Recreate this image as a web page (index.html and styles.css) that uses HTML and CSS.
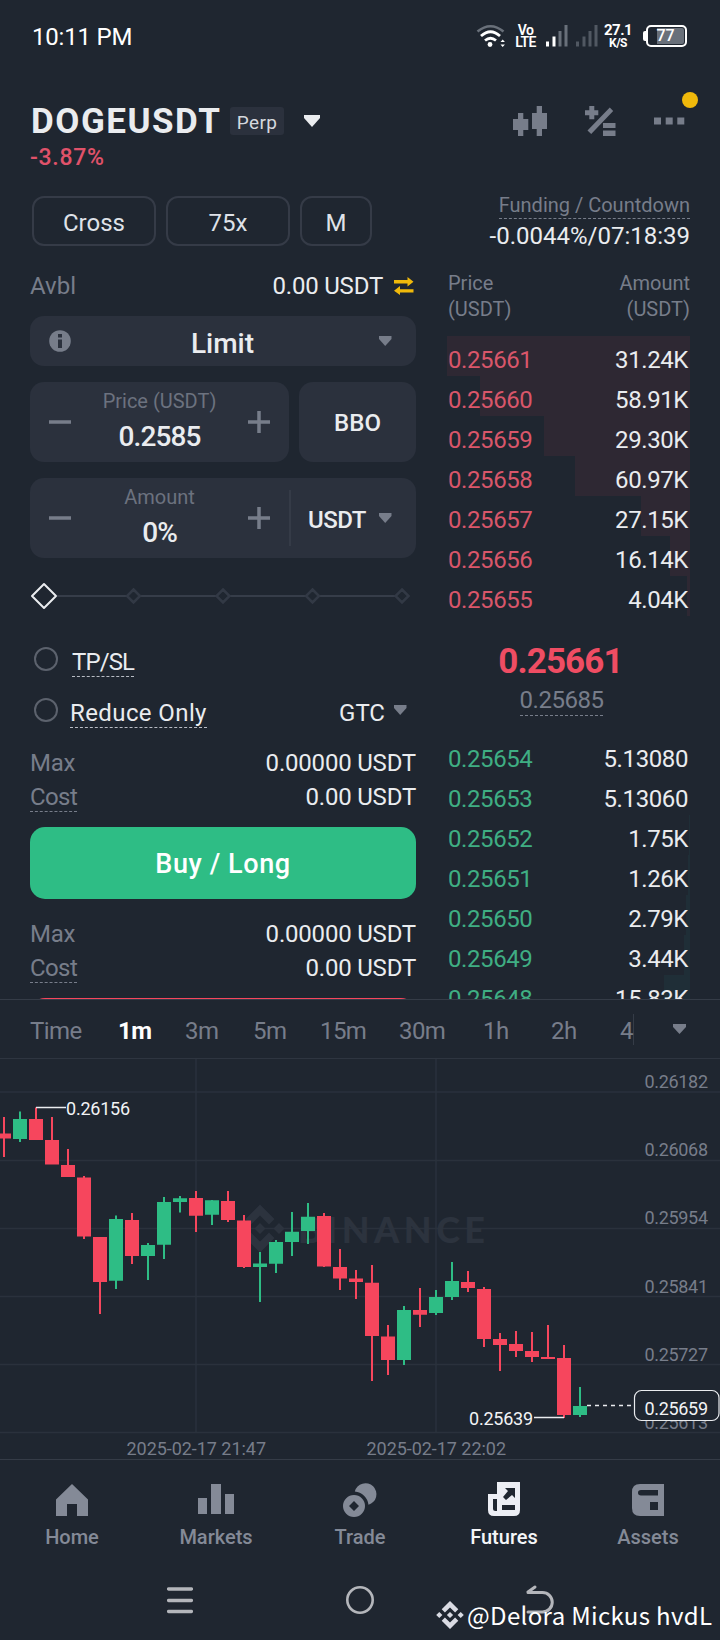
FILE: index.html
```
<!DOCTYPE html>
<html lang="en">
<head>
    <meta charset="utf-8">
    <title>DOGEUSDT Perp</title>
    <link rel="stylesheet" href="styles.css">
</head>
<body>
<div class="phone">

    <div class="status-bar">
        <span class="clock">10:11 PM</span>
        <div class="status-icons">
            <svg class="wifi" width="30" height="24" viewBox="0 0 30 24">
                <path d="M1.500 7.500Q14.500-3 27.500 7.500" fill="none" stroke="#69707a" stroke-width="2.600"/>
                <path d="M5 12Q14.500 3.500 24 12M9 16.500Q14.500 12 20 16.500" fill="none" stroke="#fff" stroke-width="2.800"/>
                <circle cx="14" cy="20.500" r="2.400" fill="#fff"/>
                <path d="M24.500 18l2.200-2.500 2.200 2.500zM24.500 20.500l2.200 2.500 2.200-2.500z" fill="#fff"/>
            </svg>
            <span class="volte">Vo<br>LTE</span>
            <svg class="signal" width="22" height="22" viewBox="0 0 22 22">
                <path d="M1.500 16.500v5M8 11.500v10" stroke="#fff" stroke-width="3"/>
                <path d="M14 6v15.500M20 0v21.500" stroke="#69707a" stroke-width="3"/>
            </svg>
            <svg class="signal second" width="22" height="22" viewBox="0 0 22 22">
                <path d="M1.500 16.500v5M8 11.500v10M14 6v15.500M20 0v21.500" stroke="#515862" stroke-width="3"/>
            </svg>
            <span class="speed">27.1<br><small>K/S</small></span>
            <div class="battery">77</div>
        </div>
    </div>

    <div class="title-row">
        <h1>DOGEUSDT</h1>
        <span class="perp">Perp</span>
        <svg class="title-arrow" width="16" height="12" viewBox="0 0 16 12"><path d="M0 0h16v3L8 12 0 3z" fill="#eaecef"/></svg>
        <div class="tools">
            <svg width="34" height="30" viewBox="0 0 34 30" fill="#777d8a">
                <path d="M5 7h5.300v6h5v11h-5v6H5v-6H0V13h5zM23.700 0H29v7h5v16h-5v7h-5.300v-7H19V7h4.700z"/>
            </svg>
            <svg width="31" height="30" viewBox="0 0 31 30" fill="#777d8a">
                <path d="M4.300 0h5v4.300h4v5h-4v4h-5v-4H0v-5h4.300zM18 17h12.500v5H18zM18 24.500h12.500V30H18zM24.800 1.500l3.400 3.400L6.200 28 2.500 24.500z"/>
            </svg>
            <div class="more">
                <svg width="31" height="30" viewBox="0 0 31 30" fill="#777d8a"><path d="M0 11.500h7v7H0zM11.700 11.500h7v7h-7zM23.300 11.500h7v7h-7z"/></svg>
                <span class="dot"></span>
            </div>
        </div>
    </div>
    <div class="change">-3.87%</div>

    <div class="mode-row">
        <div class="mode">Cross</div>
        <div class="mode">75x</div>
        <div class="mode small">M</div>
        <div class="funding">
            <span class="funding-label">Funding / Countdown</span>
            <span class="funding-value">-0.0044%/07:18:39</span>
        </div>
    </div>

    <div class="panels">
        <div class="order-form">
            <div class="avbl">
                <span class="grey">Avbl</span>
                <span class="avbl-value">0.00 USDT</span>
                <svg width="20" height="18" viewBox="0 0 20 18" fill="#f0b90b">
                    <path d="M0 3h13.500V0L19.500 4.800 13.500 9.600V6.500H0zM19.500 12.200H6V9L0 13.700 6 18v-2.500h13.500z"/>
                </svg>
            </div>

            <div class="box limit">
                <svg width="22" height="22" viewBox="0 0 22 22">
                    <circle cx="11" cy="11" r="10.800" fill="#777d8a"/>
                    <path d="M9 4h4v3.500H9zM9 9.500h4V18H9z" fill="#2b313d"/>
                </svg>
                <span>Limit</span>
                <svg width="13" height="10" viewBox="0 0 13 10"><path d="M0 0h12.500v3L6.200 10 0 3z" fill="#777d8a"/></svg>
            </div>

            <div class="price-row">
                <div class="box stepper">
                    <svg width="22" height="22" viewBox="0 0 22 22"><path d="M0 11h22" stroke="#777d8a" stroke-width="3.500"/></svg>
                    <div class="field"><small>Price (USDT)</small><b>0.2585</b></div>
                    <svg width="22" height="22" viewBox="0 0 22 22"><path d="M0 11h22M11 0v22" stroke="#777d8a" stroke-width="3.500"/></svg>
                </div>
                <div class="box bbo">BBO</div>
            </div>

            <div class="box amount-row">
                <div class="stepper">
                    <svg width="22" height="22" viewBox="0 0 22 22"><path d="M0 11h22" stroke="#777d8a" stroke-width="3.500"/></svg>
                    <div class="field"><small>Amount</small><b>0%</b></div>
                    <svg width="22" height="22" viewBox="0 0 22 22"><path d="M0 11h22M11 0v22" stroke="#777d8a" stroke-width="3.500"/></svg>
                </div>
                <div class="unit">
                    <span>USDT</span>
                    <svg width="13" height="10" viewBox="0 0 13 10"><path d="M0 0h12.500v3L6.200 10 0 3z" fill="#777d8a"/></svg>
                </div>
            </div>

            <svg class="slider" width="386" height="76" viewBox="0 0 386 76" fill="none">
                <path d="M27 38h338" stroke="#363d49" stroke-width="2"/>
                <path d="M103.500 31.500l6.500 6.500-6.500 6.500-6.500-6.500zM193 31.500l6.500 6.500-6.500 6.500-6.500-6.500zM282.500 31.500l6.500 6.500-6.500 6.500-6.500-6.500zM372 31.500l6.500 6.500-6.500 6.500-6.500-6.500z" fill="#1f2630" stroke="#323945" stroke-width="2.500"/>
                <path d="M14 26l12 12-12 12L2 38z" fill="#1f2630" stroke="#eaecef" stroke-width="2" stroke-linejoin="round"/>
            </svg>

            <div class="option">
                <span class="radio"></span>
                <span class="option-name tpsl">TP/SL</span>
            </div>
            <div class="option">
                <span class="radio"></span>
                <span class="option-name">Reduce Only</span>
                <span class="gtc">GTC</span>
                <svg class="gtc-arrow" width="13" height="10" viewBox="0 0 13 10"><path d="M0 0h12.500v3L6.200 10 0 3z" fill="#777d8a"/></svg>
            </div>

            <div class="info first"><span class="grey">Max</span><span>0.00000 USDT</span></div>
            <div class="info"><span class="grey cost">Cost</span><span>0.00 USDT</span></div>
            <div class="btn buy">Buy / Long</div>
            <div class="info second"><span class="grey">Max</span><span>0.00000 USDT</span></div>
            <div class="info"><span class="grey cost">Cost</span><span>0.00 USDT</span></div>
            <div class="btn sell"></div>
        </div>

        <div class="order-book">
            <div class="book-head">
                <div>Price<br>(USDT)</div>
                <div class="right">Amount<br>(USDT)</div>
            </div>
            <div class="asks">
                <div class="level"><i style="width: 243px"></i><span>0.25661</span><span>31.24K</span></div>
                <div class="level"><i style="width: 210px"></i><span>0.25660</span><span>58.91K</span></div>
                <div class="level"><i style="width: 146px"></i><span>0.25659</span><span>29.30K</span></div>
                <div class="level"><i style="width: 115px"></i><span>0.25658</span><span>60.97K</span></div>
                <div class="level"><i style="width: 49px"></i><span>0.25657</span><span>27.15K</span></div>
                <div class="level"><i style="width: 20px"></i><span>0.25656</span><span>16.14K</span></div>
                <div class="level"><i style="width: 3px"></i><span>0.25655</span><span>4.04K</span></div>
            </div>
            <div class="last-price">0.25661</div>
            <div class="mark-price"><span>0.25685</span></div>
            <div class="bids">
                <div class="level"><span>0.25654</span><span>5.13080</span></div>
                <div class="level"><span>0.25653</span><span>5.13060</span></div>
                <div class="level"><i style="width: 1px"></i><span>0.25652</span><span>1.75K</span></div>
                <div class="level"><i style="width: 2px"></i><span>0.25651</span><span>1.26K</span></div>
                <div class="level"><i style="width: 4px"></i><span>0.25650</span><span>2.79K</span></div>
                <div class="level"><i style="width: 6px"></i><span>0.25649</span><span>3.44K</span></div>
                <div class="level"><i style="width: 26px"></i><span>0.25648</span><span>15.83K</span></div>
            </div>
        </div>
    </div>

    <div class="intervals">
        <div class="interval-list">
            <span>Time</span>
            <span class="active">1m</span>
            <span>3m</span>
            <span>5m</span>
            <span>15m</span>
            <span>30m</span>
            <span>1h</span>
            <span>2h</span>
            <span>4</span>
        </div>
        <svg width="13" height="10" viewBox="0 0 13 10"><path d="M0 0h13v3L6.500 10 0 3z" fill="#777d8a"/></svg>
    </div>

    <svg class="chart" width="720" height="400" viewBox="0 9 720 400">
        <!-- grid -->
        <path class="grid" d="M0 42h720M0 110.500h720M0 178.500h720M0 246.500h720M0 314.500h720M0 382.500h720M196 9v373M436 9v373"/>
        <!-- logo behind the candles -->
        <g class="mark">
            <path d="M260 154.500l14.500 14.500-5.500 5.500-9-9-9 9-5.500-5.500zM260 202.500l14.500-14.500-5.500-5.500-9 9-9-9-5.500 5.500zM260 173l5.500 5.500-5.500 5.500-5.500-5.500zM279 173l5.500 5.500-5.500 5.500-5.500-5.500zM241 173l5.500 5.500-5.500 5.500-5.500-5.500z"/>
            <text x="298" y="192.500" textLength="187">BINANCE</text>
        </g>
        <!-- candles: wick, then body -->
        <path class="wick down" d="M4 67v40M36 57.500v32M52 67v47M68 99v28M84 126v63M100 187v77M132 163v51M196 141v41M228 141v31M244 165v53M324 163v54M340 199v41M356 220v29M372 215v116M388 275v50M420 238v39M468 221v21M484 237v60M500 283v38M516 281v26M532 282v30M548 275v34M564 295v73"/>
        <path class="wick up" d="M20 61.500v30.500M116 165.500v73.500M148 193v37M164 147v62M180 146v16.500M212 150v25M260 202v50M276 190v33M292 162v44M308 153v41M404 256v59M436 240v25M452 212v38M580 337v30"/>
        <path class="body down" d="M4 83.500v5M36 69v21M52 90v24.500M68 115v12M84 127.500v59M100 187v45M132 170v36M196 148v17.700M228 151v19M244 170.500v46.500M324 166v50.500M340 217v11.500M356 228.500v3.500M372 232.700v53.300M388 286.500v23.500M420 260v4.700M468 232v6M484 239v50M500 289v6M516 294v7M532 301v6M548 307v2M564 308v57"/>
        <path class="body up" d="M20 69v20M116 169v61.700M148 195v11M164 152v42.700M180 148.300v3.700M212 150.300v14.500M260 213.500v3.500M276 192v21.700M292 181.700v10.300M308 166.700v14.300M404 260v50M436 247v16M452 231v16M580 356v9"/>
        <!-- high / low / last price -->
        <path class="pointer" d="M36 57.500h30M534 367.500h30"/>
        <path class="pointer" d="M587 355.500h47" stroke-dasharray="4 4"/>
        <text class="white" x="66" y="64.700" textLength="64">0.26156</text>
        <text class="white" x="469" y="374.700" textLength="64">0.25639</text>
        <text x="644.500" y="38.300" textLength="63.500">0.26182</text>
        <text x="644.500" y="106.300" textLength="63.500">0.26068</text>
        <text x="644.500" y="174.300" textLength="63.500">0.25954</text>
        <text x="644.500" y="243" textLength="63.500">0.25841</text>
        <text x="644.500" y="311" textLength="63.500">0.25727</text>
        <text x="644.500" y="379" textLength="63.500">0.25613</text>
        <rect class="tag" x="634.500" y="340.500" width="84.500" height="30" rx="7"/>
        <text class="white" x="644.500" y="364.800" textLength="63.500">0.25659</text>
        <text x="126.500" y="405" textLength="139.500">2025-02-17 21:47</text>
        <text x="366.500" y="405" textLength="139.500">2025-02-17 22:02</text>
    </svg>

    <div class="tab-bar">
        <div class="tab">
            <svg width="36" height="36" viewBox="0 0 36 36"><path d="M18 1l16 15.500V33H23V21H13v12H2V16.500z"/></svg>
            <span>Home</span>
        </div>
        <div class="tab">
            <svg width="36" height="36" viewBox="0 0 36 36"><path d="M0 15h9v16H0zM13 1h10v30H13zM27 11h9v20h-9z"/></svg>
            <span>Markets</span>
        </div>
        <div class="tab">
            <svg width="36" height="36" viewBox="0 0 36 36">
                <path fill-rule="evenodd" d="M12 12a11 11 0 1 1 0 22 11 11 0 0 1 0-22zM12 18l-5 5 5 5 5-5z"/>
                <path d="M12.800 8.500A11 11 0 1 1 26.500 21.800 15 15 0 0 0 12.800 8.500z"/>
            </svg>
            <span>Trade</span>
        </div>
        <div class="tab active">
            <svg width="36" height="36" viewBox="0 0 36 36">
                <path d="M11-1h23v28q0 6-6 6H8q-6 0-6-6V11h9z"/>
                <path class="hole" d="M7 16h4v12H9.500Q7 28 7 25.500zM16 22h13v5H16zM19 5h10v10l-3-3-6 5-3-3 5-6z"/>
            </svg>
            <span>Futures</span>
        </div>
        <div class="tab">
            <svg width="36" height="36" viewBox="0 0 36 36">
                <path d="M10 1h24v32H10q-8 0-8-8V9q0-8 8-8z"/>
                <path class="hole" d="M11 7h17v5.500H11q-3 0-3-2.700T11 7zM20 19h8v8h-8z"/>
            </svg>
            <span>Assets</span>
        </div>
    </div>

    <div class="system-nav">
        <svg width="26" height="30" viewBox="0 0 26 30"><path d="M1.500 4h23M1.500 15.500h23M1.500 26.500h23" stroke-width="3.300"/></svg>
        <svg width="30" height="30" viewBox="0 0 30 30"><circle cx="15" cy="15" r="12.700" stroke-width="2.600"/></svg>
        <svg width="28" height="30" viewBox="0 0 28 30"><path d="M2 7.500h14.500a9.500 9.500 0 0 1 0 19.500H2M2 7l7-5" stroke-width="3"/></svg>
    </div>

    <div class="credit">
        <svg width="28" height="28" viewBox="0 0 28 28" fill="#d9dbe3">
            <path d="M14 0l8.300 8.300-3.200 3.200L14 6.400l-5.100 5.100-3.200-3.200zM14 28l8.300-8.300-3.200-3.200-5.100 5.100-5.100-5.100-3.200 3.200zM14 10.900l3.100 3.100-3.100 3.100-3.100-3.100zM24.700 10.900l3.100 3.100-3.100 3.100-3.100-3.100zM3.300 10.900L6.400 14l-3.100 3.100L.2 14z"/>
        </svg>
        <span>@Delora Mickus hvdL</span>
    </div>
</div>
</body>
</html>
```
FILE: styles.css
```
* {
    box-sizing: border-box;
}
body {
    margin: 0;
    background-color: #1f2630;
    color: #eaecef;
    font-family: Roboto, "Liberation Sans", sans-serif;
    font-size: 24px;
}
svg {
    display: block;
    flex: none;
}
.phone {
    width: 720px;
    height: 1640px;
    position: relative;
    overflow: hidden;
    background-color: #1f2630;
}
.grey {
    color: #777d8a;
}

/* status bar */
.status-bar {
    height: 72px;
    padding: 0 33px 0 32px;
    display: flex;
    align-items: center;
    justify-content: space-between;
    color: #fff;
}
.clock {
    padding-top: 2px;
    letter-spacing: -0.2px;
}
.status-icons {
    display: flex;
    align-items: center;
}
.volte {
    width: 21px;
    margin-left: 9px;
    font-size: 14px;
    font-weight: 600;
    line-height: 12px;
    text-align: center;
    letter-spacing: -0.6px;
}
.signal {
    margin-left: 10px;
}
.signal.second {
    margin-left: 8px;
}
.speed {
    width: 28px;
    margin-left: 6px;
    font-size: 15px;
    font-weight: 700;
    line-height: 12px;
    text-align: center;
    letter-spacing: -0.5px;
}
.speed small {
    font-size: 12px;
}
.battery {
    width: 41px;
    height: 22px;
    margin-left: 14px;
    padding-right: 2px;
    border: 2px solid #fff;
    border-radius: 5px;
    box-shadow: inset 0 0 0 1px #1f2630;
    background: linear-gradient(to right, #1f2630 9px, #69707a 9px);
    font-size: 16px;
    font-weight: 500;
    line-height: 18px;
    text-align: center;
    position: relative;
}
.battery::before {
    content: "";
    position: absolute;
    left: -5px;
    top: 4px;
    width: 3px;
    height: 10px;
    background-color: #fff;
    border-radius: 2px 0 0 2px;
}

/* pair title */
.title-row {
    height: 42px;
    margin-top: 28px;
    padding: 0 35px 0 31px;
    display: flex;
    align-items: center;
}
h1 {
    margin: 0;
    width: 199px;
    padding-top: 2px;
    font-size: 35px;
    line-height: 42px;
    font-weight: 700;
    letter-spacing: 1.5px;
}
.perp {
    width: 54px;
    height: 28px;
    background-color: #2b313d;
    border-radius: 3px;
    font-size: 19px;
    line-height: 31px;
    text-align: center;
    letter-spacing: 0.4px;
    color: #d5d8de;
}
.title-arrow {
    margin-left: 20px;
}
.tools {
    margin-left: auto;
    display: flex;
    gap: 38px;
}
.more {
    position: relative;
}
.dot {
    position: absolute;
    left: 28px;
    top: -14px;
    width: 16px;
    height: 16px;
    border-radius: 50%;
    background-color: #f0b90b;
}
.change {
    height: 30px;
    padding-left: 30px;
    font-size: 23px;
    line-height: 32px;
    font-weight: 500;
    letter-spacing: 0.7px;
    color: #e0526a;
}

/* margin mode buttons */
.mode-row {
    height: 61px;
    margin-top: 20px;
    padding: 0 30px 0 32px;
    display: flex;
    gap: 10px;
}
.mode {
    width: 124px;
    height: 50px;
    margin-top: 4px;
    border: 2px solid #353b47;
    border-radius: 12px;
    line-height: 50px;
    text-align: center;
    color: #dfe2e8;
}
.mode.small {
    width: 72px;
}
.funding {
    margin-left: auto;
    display: flex;
    flex-direction: column;
    align-items: flex-end;
}
.funding-label {
    font-size: 20px;
    line-height: 26px;
    border-bottom: 1px dashed #777d8a;
    color: #777d8a;
}
.funding-value {
    line-height: 34px;
}

.panels {
    height: 746px;
    padding: 0 30px;
    display: flex;
    justify-content: space-between;
    overflow: hidden;
}

/* order form */
.order-form {
    width: 386px;
    padding-top: 16px;
}
.avbl {
    height: 34px;
    padding-right: 2px;
    display: flex;
    align-items: center;
}
.avbl-value {
    margin-left: auto;
    margin-right: 11px;
    letter-spacing: -0.2px;
}
.box {
    background-color: #2b313d;
    border-radius: 14px;
}
.limit {
    height: 50px;
    margin-top: 13px;
    padding: 0 24px 0 19px;
    display: flex;
    align-items: center;
    justify-content: space-between;
    font-size: 28px;
    font-weight: 500;
}
.limit span {
    padding: 4px 5px 0 0;
}
.price-row {
    margin-top: 16px;
    display: flex;
    gap: 10px;
}
.stepper {
    width: 259px;
    height: 80px;
    padding: 0 19px;
    display: flex;
    align-items: center;
    justify-content: space-between;
}
.field {
    padding-top: 4px;
    display: flex;
    flex-direction: column;
    align-items: center;
}
.field small {
    font-size: 20px;
    line-height: 26px;
    color: #6c727f;
}
.field b {
    font-size: 28px;
    line-height: 46px;
    font-weight: 500;
    letter-spacing: -0.9px;
}
.bbo {
    width: 117px;
    height: 80px;
    line-height: 83px;
    text-align: center;
    font-weight: 500;
}
.amount-row {
    height: 80px;
    margin-top: 16px;
    display: flex;
    align-items: center;
}
.unit {
    flex: 1;
    height: 56px;
    padding: 0 24px 0 17px;
    border-left: 2px solid #353b47;
    display: flex;
    align-items: center;
    justify-content: space-between;
    font-weight: 500;
    letter-spacing: -0.5px;
}
.unit span {
    padding-top: 3px;
}
.option {
    height: 51px;
    padding-left: 4px;
    display: flex;
    align-items: flex-start;
}
.radio {
    width: 24px;
    height: 24px;
    margin: 13px 12px 0 0;
    border: 2px solid #5c626d;
    border-radius: 50%;
}
.option-name {
    margin-top: 14px;
    line-height: 28px;
    letter-spacing: 0.4px;
    border-bottom: 1px dashed #b8bcc4;
}
.tpsl {
    margin-left: 2px;
    letter-spacing: -0.9px;
}
.gtc {
    margin: 14px 9px 0 auto;
    line-height: 28px;
}
.gtc-arrow {
    margin: 20px 9px 0 0;
}
.info {
    height: 34px;
    display: flex;
    align-items: center;
    justify-content: space-between;
    letter-spacing: -0.2px;
}
.info.first {
    margin-top: 10px;
}
.info.second {
    margin-top: 18px;
}
.cost {
    line-height: 28px;
    letter-spacing: -0.6px;
    border-bottom: 1px dashed #777d8a;
}
.btn {
    height: 72px;
    margin-top: 13px;
    border-radius: 15px;
    font-size: 27px;
    font-weight: 500;
    line-height: 75px;
    letter-spacing: 0.6px;
    text-align: center;
    color: #fff;
}
.buy {
    background-color: #2ebd85;
}
.sell {
    background-color: #f6465d;
}

/* order book */
.order-book {
    width: 242px;
    padding-top: 17px;
}
.book-head {
    display: flex;
    justify-content: space-between;
    margin-bottom: 14px;
    font-size: 20px;
    line-height: 26px;
    color: #777d8a;
}
.right {
    text-align: right;
}
.level {
    height: 40px;
    padding: 8px 2px 0 0;
    line-height: 33px;
    letter-spacing: -0.4px;
    display: flex;
    justify-content: space-between;
    position: relative;
}
/* depth bar behind the numbers */
.level i {
    position: absolute;
    top: 0;
    right: 0;
    height: 40px;
}
.level span {
    position: relative;
}
.asks i {
    background-color: #2e2833;
}
.bids i {
    background-color: #1f2e37;
}
.asks span:nth-last-child(2) {
    color: #d9566a;
}
.bids span:nth-last-child(2) {
    color: #3fae83;
}
.last-price {
    height: 44px;
    margin-top: 22px;
    padding-right: 17px;
    font-size: 35px;
    font-weight: 700;
    line-height: 47px;
    letter-spacing: -0.9px;
    text-align: center;
    color: #ef4d63;
}
.mark-price {
    height: 34px;
    margin-bottom: 19px;
    padding-right: 15px;
    display: flex;
    justify-content: center;
    color: #777d8a;
}
.mark-price span {
    height: 34px;
    line-height: 36px;
    letter-spacing: -0.5px;
    border-bottom: 1px dashed #777d8a;
}

/* interval tabs */
.intervals {
    height: 60px;
    padding: 0 34px 0 30px;
    border-top: 1px solid #353c47;
    border-bottom: 1px solid #2e3540;
    display: flex;
    align-items: center;
    justify-content: space-between;
    color: #777d8a;
}
.interval-list {
    width: 604px;
    padding-top: 3px;
    display: grid;
    grid-template-columns: 88px 67px 68px 67px 79px 84px 68px 69px 13px;
    letter-spacing: -0.6px;
    border-right: 1px solid #353c47;
}
.interval-list .active {
    color: #fff;
    font-weight: 700;
}

/* chart */
.chart text {
    font-size: 18px;
    fill: #777d8a;
}
.chart .white {
    fill: #f2f3f5;
}
.chart .mark {
    fill: #2c333e;
}
.chart .mark text {
    font-family: Lato, sans-serif;
    font-size: 36px;
    font-weight: 900;
    fill: #2c333e;
}
.grid {
    fill: none;
    stroke: #2a313c;
    stroke-width: 1.5;
}
.wick {
    stroke-width: 2;
}
.body {
    stroke-width: 14;
}
.down {
    stroke: #f6465d;
}
.up {
    stroke: #2ebd85;
}
.pointer {
    fill: none;
    stroke: #eaecef;
    stroke-width: 1.3;
}
.tag {
    fill: #1f2630;
    stroke: #eaecef;
    stroke-width: 1.2;
}

/* bottom tabs */
.tab-bar {
    height: 101px;
    padding-top: 23px;
    border-top: 1px solid #353c47;
    display: flex;
}
.tab {
    width: 144px;
    display: flex;
    flex-direction: column;
    align-items: center;
    gap: 6px;
    font-size: 20px;
    line-height: 24px;
    font-weight: 500;
    color: #848a97;
    fill: #848a97;
}
.tab svg {
    overflow: visible;
}
.tab.active {
    color: #f5f6f8;
    fill: #eceef4;
}
.hole {
    fill: #1f2630;
}

.system-nav {
    height: 80px;
    padding: 0 90px;
    display: grid;
    grid-template-columns: repeat(3, 1fr);
    align-items: center;
    justify-items: center;
    fill: none;
    stroke: #b4b6bb;
    stroke-linecap: round;
}
.credit {
    position: absolute;
    left: 436px;
    top: 1598px;
    display: flex;
    align-items: center;
    gap: 3px;
    font-family: "Noto Sans CJK SC", sans-serif;
    font-size: 24px;
    line-height: 34px;
    letter-spacing: 0.35px;
    color: #fff;
    white-space: nowrap;
}
```
